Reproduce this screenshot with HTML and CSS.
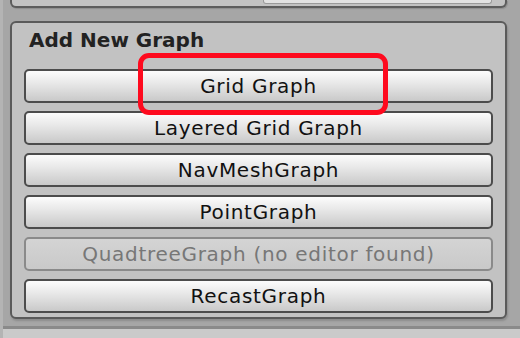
FILE: index.html
```html
<!DOCTYPE html>
<html>
	<head>
		<meta charset="utf-8" />
		<title>Add New Graph</title>
		<link rel="stylesheet" href="styles.css">
	</head>
	<body>
		<div class="inspector">
			<!--上一个面板的底部-->
			<div class="prev-panel">
				<div class="prev-field"></div>
			</div>
			<div class="panel">
				<div class="title">Add New Graph</div>
				<div class="buttons">
					<div class="btn">Grid Graph</div>
					<div class="btn">Layered Grid Graph</div>
					<div class="btn">NavMeshGraph</div>
					<div class="btn">PointGraph</div>
					<div class="btn disabled">QuadtreeGraph (no editor found)</div>
					<div class="btn">RecastGraph</div>
				</div>
				<!--红色标记框-->
				<div class="mark"></div>
			</div>
			<div class="footer"></div>
		</div>
	</body>
</html>
```

FILE: styles.css
```css
*{
	margin: 0;
	padding: 0;
	box-sizing: border-box;
}
body {
	width: 520px;
	height: 338px;
	overflow: hidden;
	background: #a6a6a6;
	font-family: "DejaVu Sans", Verdana, sans-serif;
}
.inspector {
	height: 338px;
	border-left: 3px solid #b4b4b4;
	display: flex;
	flex-direction: column;
}
.prev-panel {
	margin-left: 7px;
	width: 497px;
	height: 8px;
	background: #c2c2c2;
	border: 2px solid #5c5c5c;
	border-top: 0;
	border-radius: 0 0 6px 6px;
	box-shadow: 1px 1px 1px #8e8e8e;
	display: flex;
	justify-content: flex-end;
	padding-right: 13px;
}
.prev-field {
	width: 229px;
	height: 4px;
	background: #e2e2e2;
	border: 1px solid #9a9a9a;
	border-top: 0;
	border-radius: 0 0 3px 3px;
}
.panel {
	position: relative;
	margin: 13px 0 0 7px;
	width: 497px;
	height: 298px;
	background: #c2c2c2;
	border: 2px solid #5a5a5a;
	border-radius: 6px;
	box-shadow: 1px 2px 2px #8c8c8c;
	padding: 0 12px;
}
.title {
	font-size: 20px;
	font-weight: bold;
	color: #222;
	height: 46px;
	line-height: 22px;
	padding: 6px 0 0 5px;
}
.buttons {
	display: flex;
	flex-direction: column;
	gap: 8px;
}
.btn {
	height: 34px;
	border: 2px solid #4c4c4c;
	border-radius: 5px;
	background: linear-gradient(#fcfcfc, #e6e6e6 45%, #c9c9c9);
	text-align: center;
	font-size: 20px;
	letter-spacing: 0.7px;
	line-height: 30px;
	color: #111;
}
.btn.disabled {
	border-color: #8a8a8a;
	background: linear-gradient(#d4d4d4, #c9c9c9);
	color: #777;
}
.mark {
	position: absolute;
	left: 126px;
	top: 30px;
	width: 250px;
	height: 62px;
	border: 5px solid #fe0a1e;
	border-radius: 11px;
}
.footer {
	margin-top: auto;
	height: 12px;
	border-top: 3px solid #8a8a8a;
	background: #cacaca;
}
```
